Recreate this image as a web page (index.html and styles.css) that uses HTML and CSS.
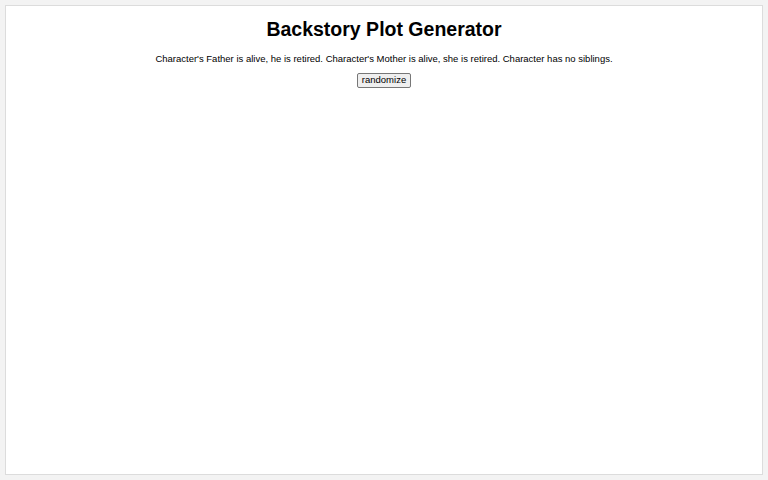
FILE: index.html
```html
<!DOCTYPE html>
<html>
<head>
  <meta charset="utf-8">
  <title>Backstory Plot Generator</title>
  <link rel="stylesheet" href="styles.css">
</head>
<body>
  <div class="page">
    <h1 class="title">Backstory Plot Generator</h1>
    <p class="story">Character's Father is alive, he is retired. Character's Mother is alive, she is retired. Character has no siblings.</p>
    <div class="actions"><button class="randomize">randomize</button></div>
  </div>
</body>
</html>
```

FILE: styles.css
```css
html, body { height: 100%; }
body { margin: 0; padding: 5px; box-sizing: border-box; background: #f3f3f3; font-family: "Liberation Sans", Arial, sans-serif; color: #000; }
.page { box-sizing: border-box; height: 100%; background: #fff; border: 1px solid #dcdcdc; text-align: center; padding-top: 9px; }
.title { margin: 0; font-size: 19.5px; font-weight: bold; line-height: 28px; }
.story { margin: 9px 0 0; font-size: 9.5px; line-height: 14px; }
.actions { margin-top: 3px; }
.randomize { font-family: "Liberation Sans", Arial, sans-serif; font-size: 9.5px; padding: 0 4px; height: 15px; line-height: 12px; border: 1px solid #777; border-radius: 2px; background: #efefef; color: #000; }
```
